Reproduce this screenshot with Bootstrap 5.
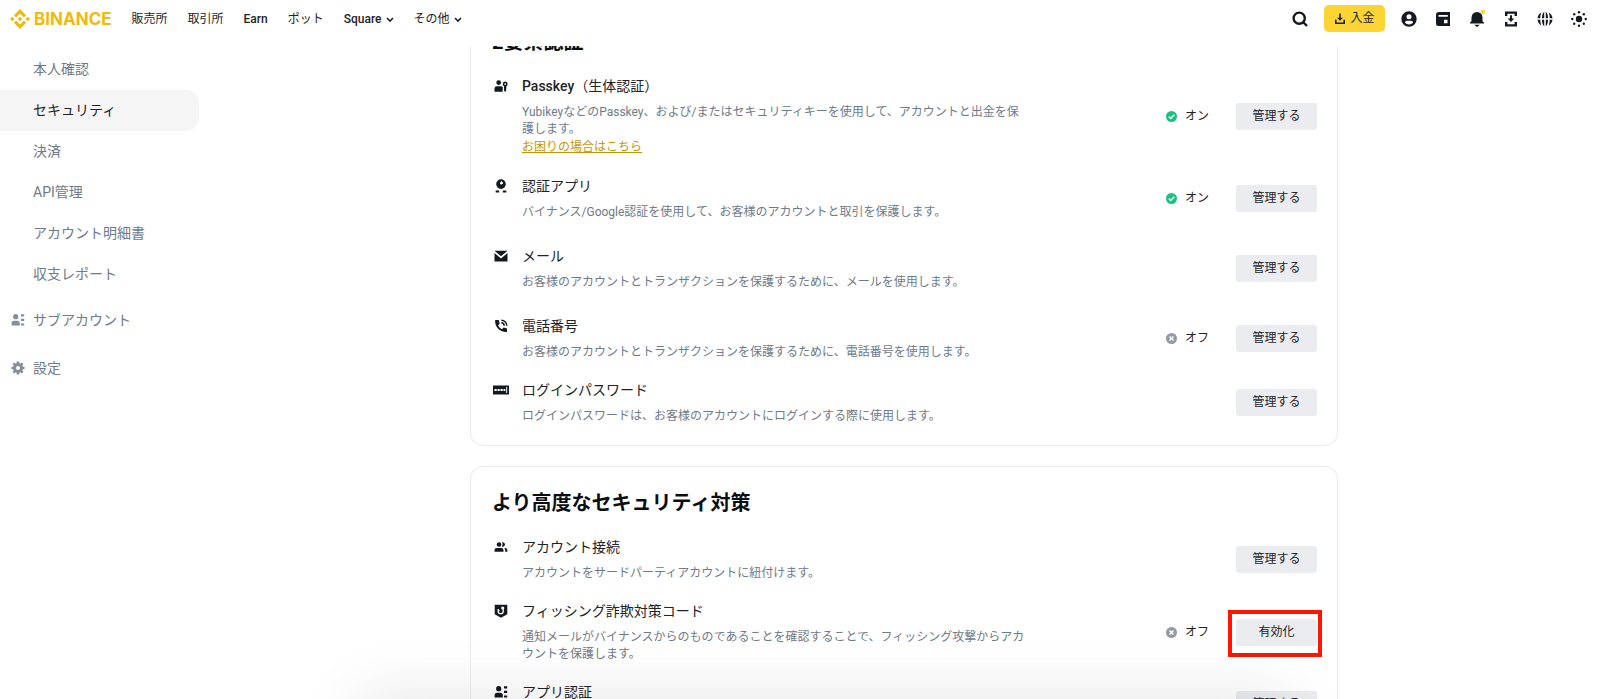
<!DOCTYPE html>
<html lang="ja">
<head>
<meta charset="utf-8">
<meta name="viewport" content="width=device-width, initial-scale=1">
<title>セキュリティ</title>
<link href="https://cdn.jsdelivr.net/npm/bootstrap@5.3.0/dist/css/bootstrap.min.css" rel="stylesheet">
<style>
:root{--ink:#1e2329;--muted:#707a8a;--line:#eaecef;--gold:#f0b90b}
body{font-family:Roboto,"Noto Sans CJK JP",sans-serif;font-size:12px;line-height:17px;color:var(--ink);background:#fff}
svg{display:block;flex:none;fill:currentColor}
.btn{font-size:12px;line-height:17px;color:var(--ink)}
.topbar{height:46px;padding:0 13px 9px 10px;background:#fff}
.brand{color:var(--gold);font:700 17px/20px Inter,sans-serif;gap:4px;margin-right:20px}
.topnav{gap:20px;font-weight:500;padding-top:2px}
.topnav a,.brand,.side a{text-decoration:none}
.topnav a{color:var(--ink)}
.topnav .ja{font-weight:400}
.tools{gap:18px}
.tool{width:16px;height:16px;color:#14181f}
.deposit{width:61px;height:27px;background:#fcd535;border-radius:5px}
.side{width:208px;padding-top:49px;font-size:14px}
.side a{height:41px;color:var(--muted);padding-left:33px;margin-right:9px;border-radius:0 13px 13px 0}
.side a.current{background:#f5f5f5;color:var(--ink)}
.side a.top{height:48px;padding-left:11px;gap:8px}
.side a.top svg{color:#848e9c}
.side .gap-top{margin-top:1px}
.content{padding-top:5px}
.panel{width:100%;max-width:868px;border:1px solid var(--line);border-radius:13px;padding:21px 20px 20px 21px;margin-bottom:20px}
.panel h2{font-size:20px;line-height:30px;font-weight:700;margin-bottom:19px;color:#0b0e11}
.item{min-height:45px}
.item + .item{margin-top:19px}
.item.roomy{margin-bottom:25px}
.glyph{width:18px;height:20px;margin-right:12px;color:#14181f}
.item h3{font-size:14px;line-height:20px;font-weight:400;margin-bottom:8px}
.item h3 span{font-weight:500}
.copy{width:506px}
.copy p{color:var(--muted);margin:0}
.copy a{color:#c99400;display:inline-block;margin-top:1px}
.helped{padding-bottom:1px}
.state{width:70px;gap:8px}
.act,.act:hover{width:81px;height:27px;background:#eaecef;border-radius:3px}
.marked::after{content:"";position:absolute;inset:-9px -5px -11px -8px;border:4px solid #ff1500;pointer-events:none}
.dock-shade{height:20px;bottom:-30px;left:23%;right:20%;box-shadow:0 0 64px 8px rgba(0,0,0,.14);pointer-events:none}
</style>
</head>
<body class="vh-100 overflow-hidden">
<svg width="0" height="0" class="position-absolute" aria-hidden="true">
  <symbol id="on" viewBox="0 0 11 11"><circle cx="5.500" cy="5.500" r="5.500" fill="#1fbf82"/><path d="m2.800 5.600 1.900 1.900 3.600-3.700" fill="none" stroke="#fff" stroke-width="1.500"/></symbol>
  <symbol id="off" viewBox="0 0 11 11"><circle cx="5.500" cy="5.500" r="5.500" fill="#929aa5"/><path d="m3.500 3.500 4 4m0-4-4 4" fill="none" stroke="#fff" stroke-width="1.500"/></symbol>
  <symbol id="caret" viewBox="0 0 8 8"><path d="m1 2 3 3 3-3" fill="none" stroke="currentColor" stroke-width="1.600"/></symbol>
  <symbol id="member" viewBox="0 0 14 14"><circle cx="4.700" cy="3.700" r="2.600"/><path d="M.6 12.600V10.500a2.600 2.600 0 0 1 2.600-2.700h3a2.600 2.600 0 0 1 2.600 2.700v2.100zM10 1.200h3.200v2.200H10zM10 5.800h3.200V8H10zM10 10.400h3.200v2.200H10z"/></symbol>
</svg>

<header class="topbar fixed-top d-flex align-items-center justify-content-between">
  <div class="d-flex align-items-center">
    <a href="#" class="brand d-flex align-items-center"><svg width="20" height="20" viewBox="0 0 24 24"><path d="M7.400 10.100 12 5.500l4.600 4.600 2.700-2.700L12 0 4.700 7.400zM0 12l2.700-2.700L5.400 12l-2.700 2.700zM7.400 13.900 12 18.500l4.600-4.600 2.700 2.700L12 24l-7.300-7.400zM18.600 12l2.700-2.700L24 12l-2.700 2.700zM14.700 12 12 9.300 9.300 12 12 14.700z"/></svg>BINANCE</a>
    <nav class="topnav d-flex align-items-center">
      <a href="#" class="ja">販売所</a>
      <a href="#" class="ja">取引所</a>
      <a href="#">Earn</a>
      <a href="#" class="ja">ポット</a>
      <a href="#" class="d-flex align-items-center gap-1">Square <svg width="8" height="8"><use href="#caret"/></svg></a>
      <a href="#" class="d-flex align-items-center gap-1 ja">その他 <svg width="8" height="8"><use href="#caret"/></svg></a>
    </nav>
  </div>
  <div class="d-flex align-items-center gap-3">
    <button class="btn p-0 border-0 tool" aria-label="検索"><svg width="16" height="16" viewBox="0 0 16 16"><g fill="none" stroke="currentColor" stroke-width="2.400"><circle cx="7.200" cy="7.200" r="5.600"/><path d="m11 11 4 4"/></g></svg></button>
    <button class="btn deposit p-0 border-0 d-flex align-items-center justify-content-center gap-1"><svg width="12" height="12" viewBox="0 0 12 12"><path d="M5.200.5h1.600v4.300H9L6 7.800l-3-3h2.200zM1 6.800h1.600v2.700h6.800V6.800H11v4.300H1z"/></svg>入金</button>
    <div class="tools d-flex">
      <button class="btn p-0 border-0 tool" aria-label="アカウント"><svg width="16" height="16" viewBox="0 0 16 16"><path fill-rule="evenodd" d="M8 .3a7.700 7.700 0 1 0 0 15.400A7.700 7.700 0 0 0 8 .3zM8 3.200a2.500 2.500 0 1 1 0 5 2.500 2.500 0 0 1 0-5zM3.800 11.500C4.300 10.200 5 9.700 6 9.700h4c1 0 1.700.5 2.200 1.800a5.600 5.600 0 0 1-8.400 0z"/></svg></button>
      <button class="btn p-0 border-0 tool" aria-label="ウォレット"><svg width="16" height="16" viewBox="0 0 16 16"><path fill-rule="evenodd" d="M4 1h11v14H3.500A2.500 2.500 0 0 1 1 12.500V4a3 3 0 0 1 3-3zM3.500 4v1.700h9.300V4zM9 8.700v3.600h3.500V8.700z"/></svg></button>
      <button class="btn p-0 border-0 tool" aria-label="通知"><svg width="16" height="16" viewBox="0 0 16 16" overflow="visible"><path d="M8 1a5.500 5.500 0 0 0-5.500 5.500v3.700L1 11.500v1h14v-1l-1.500-1.300V6.500A5.500 5.500 0 0 0 8 1zM5.200 13.700h5.600L8 16z"/><circle cx="14" cy="1" r="2.300" fill="#fcd535"/></svg></button>
      <button class="btn p-0 border-0 tool" aria-label="ダウンロード"><svg width="16" height="16" viewBox="0 0 16 16"><path d="M2 .5h12V5h-2.400V2.800H4.400V5H2zM2 11v4.500h12V11h-2.400v2.200H4.400V11zM7 4.200h2v3.300h2.300L8 11 4.700 7.500H7z"/></svg></button>
      <button class="btn p-0 border-0 tool" aria-label="言語"><svg width="16" height="16" viewBox="0 0 16 16"><path d="M7.200.8C5.500 2.300 5 4.500 5 7.200h2.200zM8.800.8C10.500 2.300 11 4.500 11 7.200H8.800zM7.200 15.200C5.500 13.700 5 11.500 5 8.800h2.200zM8.800 15.200c1.700-1.500 2.200-3.700 2.200-6.400H8.800zM4.400 1.500A7.600 7.600 0 0 0 .5 7.200h2.800c0-2.300.3-4.100 1.100-5.700zM4.400 14.500A7.600 7.600 0 0 1 .5 8.800h2.800c0 2.300.3 4.100 1.100 5.700zM11.600 1.500a7.600 7.600 0 0 1 3.900 5.700h-2.800c0-2.300-.3-4.100-1.100-5.700zM11.600 14.500a7.600 7.600 0 0 0 3.900-5.700h-2.800c0 2.300-.3 4.100-1.100 5.700z"/></svg></button>
      <button class="btn p-0 border-0 tool" aria-label="テーマ"><svg width="16" height="16" viewBox="0 0 16 16"><circle cx="8" cy="8" r="3.200"/><circle cx="8" cy="1.300" r="1.200"/><circle cx="8" cy="14.700" r="1.200"/><circle cx="1.300" cy="8" r="1.200"/><circle cx="14.700" cy="8" r="1.200"/><circle cx="3.200" cy="3.200" r="1.200"/><circle cx="12.800" cy="3.200" r="1.200"/><circle cx="3.200" cy="12.800" r="1.200"/><circle cx="12.800" cy="12.800" r="1.200"/></svg></button>
    </div>
  </div>
</header>

<div class="d-flex">
  <nav class="side flex-shrink-0 d-flex flex-column">
    <a href="#" class="d-flex align-items-center">本人確認</a>
    <a href="#" class="d-flex align-items-center current" aria-current="page">セキュリティ</a>
    <a href="#" class="d-flex align-items-center">決済</a>
    <a href="#" class="d-flex align-items-center">API管理</a>
    <a href="#" class="d-flex align-items-center">アカウント明細書</a>
    <a href="#" class="d-flex align-items-center">収支レポート</a>
    <a href="#" class="d-flex align-items-center top gap-top"><svg width="14" height="14"><use href="#member"/></svg>サブアカウント</a>
    <a href="#" class="d-flex align-items-center top"><svg width="14" height="14" viewBox="0 0 14 14"><circle cx="7" cy="7" r="3.500" fill="none" stroke="currentColor" stroke-width="3"/><path d="M7 .5v2.500M7 11v2.500M.5 7H3M11 7h2.500M2.400 2.400l1.800 1.800M9.800 9.800l1.800 1.800M2.400 11.600l1.800-1.800M9.800 4.200l1.800-1.800" stroke="currentColor" stroke-width="2.600"/></svg>設定</a>
  </nav>

  <main class="content flex-grow-1 d-flex flex-column align-items-center">
    <section class="panel">
      <h2>2要素認証</h2>
      <div class="item helped d-flex">
        <div class="glyph d-flex align-items-center justify-content-center"><svg width="14" height="14" viewBox="0 0 14 14"><path fill-rule="evenodd" d="M4.700 1.200a2.400 2.400 0 1 1 0 4.800 2.400 2.400 0 0 1 0-4.800zM.5 12.700V9.500A2.300 2.300 0 0 1 2.800 7.200h4a3 3 0 0 1 1.900.6v4.900zM11.200 2.500a2.500 2.500 0 0 0-1.200 4.700v4.300l1.200 1.500 1.200-1.500-.6-1 .6-1-.1-2.300a2.500 2.500 0 0 0-1.100-4.700zm0 1.700a.9.900 0 1 1 0 1.800.9.900 0 0 1 0-1.800z"/></svg></div>
        <div class="copy"><h3><span>Passkey</span>（生体認証）</h3><p>YubikeyなどのPasskey、および/またはセキュリティキーを使用して、アカウントと出金を保護します。</p><a href="#">お困りの場合はこちら</a></div>
        <div class="state ms-auto d-flex align-items-center"><svg width="11" height="11"><use href="#on"/></svg>オン</div>
        <button class="btn act p-0 border-0 align-self-center">管理する</button>
      </div>
      <div class="item roomy d-flex">
        <div class="glyph d-flex align-items-center justify-content-center"><svg width="14" height="14" viewBox="0 0 14 14"><path fill-rule="evenodd" d="M7 .3a4.800 4.800 0 1 0 0 9.600A4.800 4.800 0 0 0 7 .3zM7.300 2a3 3 0 0 1 1.800 2.600L7 5.800 5.800 4.300zM1.700 11.600h3.500v2H1.700zM8.800 11.600h3.500v2H8.800z"/></svg></div>
        <div class="copy"><h3>認証アプリ</h3><p>バイナンス/Google認証を使用して、お客様のアカウントと取引を保護します。</p></div>
        <div class="state ms-auto d-flex align-items-center"><svg width="11" height="11"><use href="#on"/></svg>オン</div>
        <button class="btn act p-0 border-0 align-self-center">管理する</button>
      </div>
      <div class="item roomy d-flex">
        <div class="glyph d-flex align-items-center justify-content-center"><svg width="14" height="14" viewBox="0 0 14 14"><path d="M.5 1.800h13L7 7.300zM.5 4l6.500 5.500L13.500 4v8.500H.5z"/></svg></div>
        <div class="copy"><h3>メール</h3><p>お客様のアカウントとトランザクションを保護するために、メールを使用します。</p></div>
        <button class="btn act p-0 border-0 align-self-center ms-auto">管理する</button>
      </div>
      <div class="item d-flex">
        <div class="glyph d-flex align-items-center justify-content-center"><svg width="14" height="14" viewBox="0 0 14 14"><path d="M1.200 1h3.600l.9 3.700-1.700 1.500a9 9 0 0 0 4.100 4.100l1.500-1.700 3.400.8v3.600C6.200 13.500.5 8 1.200 1z"/><path d="M7.300 3.800a3 3 0 0 1 2.900 2.900M7.300 1.200a5.500 5.500 0 0 1 5.500 5.500" fill="none" stroke="currentColor" stroke-width="1.500"/></svg></div>
        <div class="copy"><h3>電話番号</h3><p>お客様のアカウントとトランザクションを保護するために、電話番号を使用します。</p></div>
        <div class="state ms-auto d-flex align-items-center"><svg width="11" height="11"><use href="#off"/></svg>オフ</div>
        <button class="btn act p-0 border-0 align-self-center">管理する</button>
      </div>
      <div class="item d-flex">
        <div class="glyph d-flex align-items-center justify-content-center"><svg width="16" height="10" viewBox="0 0 16 10"><path fill-rule="evenodd" d="M0 .5h16v9H0zM1.500 4v2h2.200V4zM4.500 4v2h2.200V4zM7.500 4v2h2.200V4zM10.500 4v2h1.800V4zM13.200 2v6h1V2z"/></svg></div>
        <div class="copy"><h3>ログインパスワード</h3><p>ログインパスワードは、お客様のアカウントにログインする際に使用します。</p></div>
        <button class="btn act p-0 border-0 align-self-center ms-auto">管理する</button>
      </div>
    </section>

    <section class="panel">
      <h2>より高度なセキュリティ対策</h2>
      <div class="item d-flex">
        <div class="glyph d-flex align-items-center justify-content-center"><svg width="14" height="14" viewBox="0 0 14 14"><circle cx="5" cy="4.500" r="2.300"/><path d="M.5 11.700v-1.400a2.300 2.300 0 0 1 2.300-2.300h4.400a2.300 2.300 0 0 1 2.300 2.300v1.400zM8 2.300a2.300 2.300 0 1 1 0 4.400 4 4 0 0 0 0-4.400zM10.200 8h.8a2.400 2.400 0 0 1 2.400 2.400v1.300h-2.200v-1.500c0-.9-.4-1.600-1-2.200z"/></svg></div>
        <div class="copy"><h3>アカウント接続</h3><p>アカウントをサードパーティアカウントに紐付けます。</p></div>
        <button class="btn act p-0 border-0 align-self-center ms-auto">管理する</button>
      </div>
      <div class="item d-flex">
        <div class="glyph d-flex align-items-center justify-content-center"><svg width="14" height="14" viewBox="0 0 14 14"><path d="M.7.8h12.600v9.400L7 13.700.7 10.200z"/><path d="M4.200 5v2.200a2.500 2.500 0 0 0 5 0V4.500M4 7.500l1.200-1.700" fill="none" stroke="#fff" stroke-width="1.300"/><circle cx="8.700" cy="4" r="1.600" fill="#fff"/></svg></div>
        <div class="copy"><h3>フィッシング詐欺対策コード</h3><p>通知メールがバイナンスからのものであることを確認することで、フィッシング攻撃からアカウントを保護します。</p></div>
        <div class="state ms-auto d-flex align-items-center"><svg width="11" height="11"><use href="#off"/></svg>オフ</div>
        <div class="marked position-relative align-self-center"><button class="btn act p-0 border-0 d-block">有効化</button></div>
      </div>
      <div class="item d-flex">
        <div class="glyph d-flex align-items-center justify-content-center"><svg width="14" height="14"><use href="#member"/></svg></div>
        <div class="copy"><h3>アプリ認証</h3></div>
        <button class="btn act p-0 border-0 align-self-center ms-auto">管理する</button>
      </div>
    </section>
  </main>
</div>
<div class="dock-shade position-fixed"></div>
<script src="https://cdn.jsdelivr.net/npm/bootstrap@5.3.0/dist/js/bootstrap.bundle.min.js"></script>
</body>
</html>
